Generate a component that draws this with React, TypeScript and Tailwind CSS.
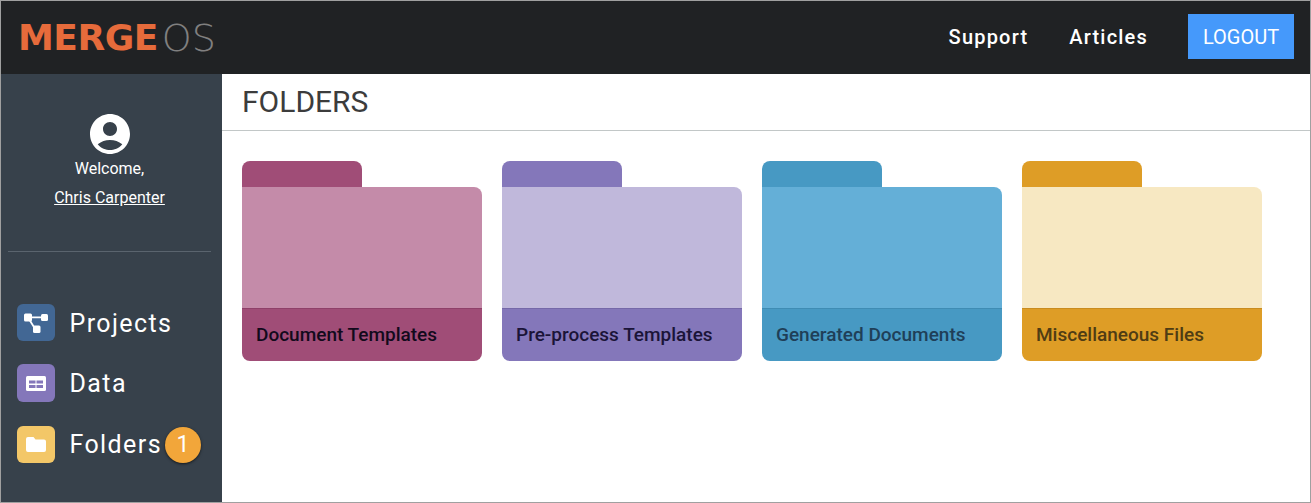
import { MdAccountCircle } from "react-icons/md";

const folders = [
  { name: "Document Templates", tab: "bg-[#a04d77]", body: "bg-[#c48ba9]", line: "border-[#8f4069]", text: "text-[#120a1c]" },
  { name: "Pre-process Templates", tab: "bg-[#8477ba]", body: "bg-[#c0b8db]", line: "border-[#7568a8]", text: "text-[#1b1438]" },
  { name: "Generated Documents", tab: "bg-[#4799c3]", body: "bg-[#64afd7]", line: "border-[#3f8cb4]", text: "text-[#1f3f58]" },
  { name: "Miscellaneous Files", tab: "bg-[#de9d26]", body: "bg-[#f7e8c2]", line: "border-[#c98c1f]", text: "text-[#4f3c14]" },
];

const ProjectsIcon = () => (
  <svg width="26" height="28" viewBox="0 0 26 28" fill="white">
    <rect x="1" y="4.500" width="8" height="8" rx="1.500" />
    <rect x="18" y="5" width="7" height="7" rx="1.500" />
    <rect x="10" y="16.500" width="7.500" height="7.500" rx="1.500" />
    <path d="M8 7.600h11v1.700H8zM5.500 11l1.500-.9 5 8-1.500.9z" />
  </svg>
);

const DataIcon = () => (
  <svg width="20" height="15" viewBox="0 0 20 15">
    <rect width="20" height="15" rx="1.500" fill="white" />
    <rect x="3" y="4.500" width="6.500" height="3" fill="#8477ba" />
    <rect x="10.500" y="4.500" width="6.500" height="3" fill="#8477ba" />
    <rect x="3" y="9" width="6.500" height="3" fill="#8477ba" />
    <rect x="10.500" y="9" width="6.500" height="3" fill="#8477ba" />
  </svg>
);

const FolderIcon = () => (
  <svg width="20" height="15" viewBox="0 0 20 15" fill="white">
    <path d="M2 0h5.500l2 2.500H18a2 2 0 0 1 2 2V13a2 2 0 0 1-2 2H2a2 2 0 0 1-2-2V2a2 2 0 0 1 2-2z" />
  </svg>
);

const navItems = [
  { label: "Projects", color: "bg-[#426794]", size: "h-[37px]", icon: <ProjectsIcon /> },
  { label: "Data", color: "bg-[#8477ba]", size: "h-[38px]", icon: <DataIcon /> },
  { label: "Folders", color: "bg-[#f3c768]", size: "h-[37px]", icon: <FolderIcon />, badge: 1 },
];

export default function App() {
  return (
    <div className="w-[1311px] h-[503px] border border-[#a0a0a0] bg-white flex flex-col overflow-hidden font-['Roboto',sans-serif]">
      {/* HEADER */}
      <div className="h-[73px] shrink-0 bg-[#202224] flex items-center justify-between pl-[17px] pr-4">
        <div className="flex items-center leading-none">
          <span className="font-['DejaVu_Sans',sans-serif] font-bold text-[36px] text-[#e66b3b] tracking-[-0.5px]">MERGE</span>
          <span className="ml-[4px] font-['DejaVu_Sans',sans-serif] font-extralight text-[38px] text-[#808080]">OS</span>
        </div>
        <div className="flex items-center mb-[2px]">
          <a className="text-white font-medium text-[20px] tracking-[1.2px]">Support</a>
          <a className="ml-[41px] text-white font-medium text-[20px] tracking-[1.2px]">Articles</a>
          <button className="ml-[40px] w-[106px] h-[45px] bg-[#4599fb] text-white text-[20px]">LOGOUT</button>
        </div>
      </div>

      <div className="flex flex-1 min-h-0">
        {/* SIDEBAR */}
        <div className="w-[221px] shrink-0 bg-[#37414b] flex flex-col">
          <div className="flex flex-col items-center pt-[40px] ml-[7px] mr-[11px] h-[178px] border-b border-[#5a646e]">
            <div className="w-10 h-10 flex items-center justify-center">
              <MdAccountCircle className="text-white shrink-0" size={48} />
            </div>
            <p className="text-white text-[16px] leading-5 mt-[5px]">Welcome,</p>
            <a className="text-white text-[16px] leading-5 mt-[9px] underline">Chris Carpenter</a>
          </div>
          <div className="flex flex-col gap-[23px] pl-4 pt-[52px]">
            {navItems.map((item) => (
              <div key={item.label} className="flex items-center">
                <div className={`w-[38px] rounded-md flex items-center justify-center ${item.size} ${item.color}`}>
                  {item.icon}
                </div>
                <span className="ml-[14.5px] pt-[2px] leading-[30px] text-white text-[25px] tracking-[1.4px]">{item.label}</span>
                {item.badge && (
                  <span className="ml-[3px] mt-[2px] w-9 h-9 rounded-full bg-[#f2a63a] text-white text-[23px] flex items-center justify-center shadow-sm shadow-black/50">
                    {item.badge}
                  </span>
                )}
              </div>
            ))}
          </div>
        </div>

        {/* MAIN */}
        <div className="flex-1 min-w-0">
          <div className="h-[57px] border-b border-[#c2c7c7] pl-5 pb-[2px] flex items-center">
            <h1 className="text-[30px] text-[#3c3c3c]">FOLDERS</h1>
          </div>
          <div className="flex gap-5 pl-5 pt-[30px]">
            {folders.map((f) => (
              <div key={f.name} className="w-[240px]">
                <div className={`w-[120px] h-[26px] rounded-t-lg ${f.tab}`} />
                <div className={`h-[121px] rounded-tr-lg ${f.body}`} />
                <div className={`h-[53px] rounded-b-lg border-t pl-[14px] flex items-center ${f.tab} ${f.line}`}>
                  <span className={`text-[19px] font-medium ${f.text}`}>{f.name}</span>
                </div>
              </div>
            ))}
          </div>
        </div>
      </div>
    </div>
  );
}
